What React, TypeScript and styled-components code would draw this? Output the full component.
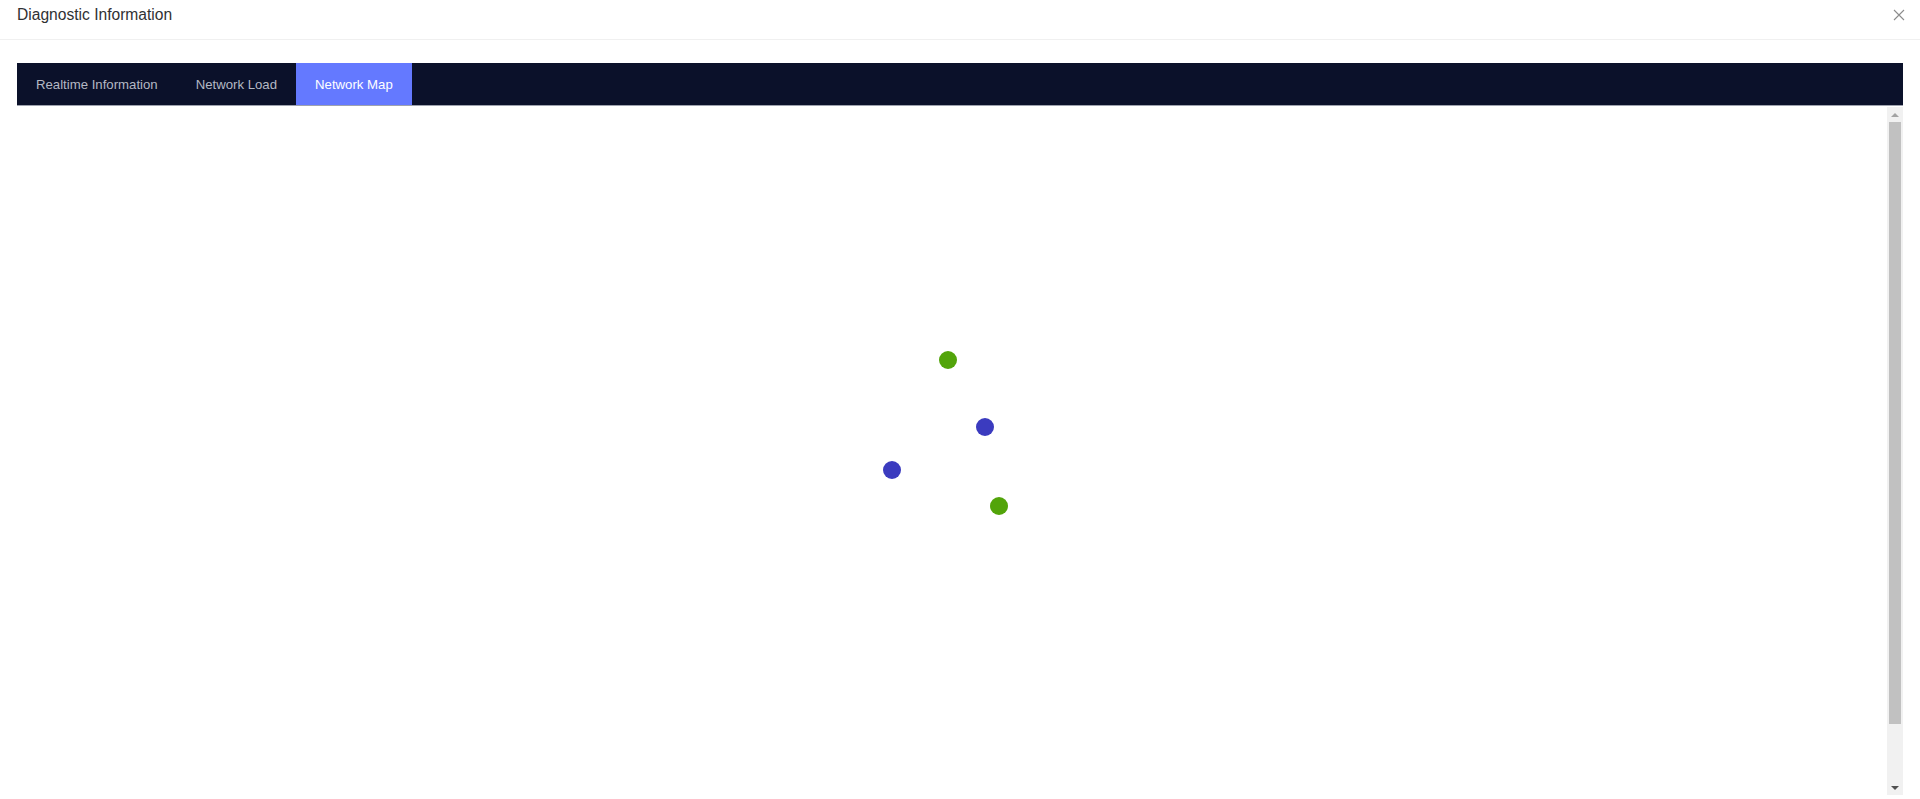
import styled, { createGlobalStyle } from 'styled-components';

const Global = createGlobalStyle`
  html, body {
    margin: 0;
    padding: 0;
    background: #ffffff;
    font-family: "Segoe UI", "Liberation Sans", "Noto Sans", Arial, sans-serif;
  }
`

const Janela = styled.div`
  width: 1920px;
  height: 799px;
  display: flex;
  flex-direction: column;
  overflow: hidden;
`
const Cabecalho = styled.div`
  height: 39px;
  flex: 0 0 39px;
  display: flex;
  align-items: center;
  justify-content: space-between;
  padding: 0 14px 0 17px;
  border-bottom: 1px solid #f0f0f0;
  box-sizing: content-box;
`
const Titulo = styled.h1`
  margin: 0 0 10px 0;
  font-size: 15.6px;
  font-weight: 400;
  color: #303133;
`
const Fechar = styled.button`
  width: 14px;
  height: 14px;
  padding: 0;
  margin-bottom: 10px;
  border: none;
  background: transparent;
  display: flex;
  align-items: center;
  justify-content: center;
  cursor: pointer;
`
const Corpo = styled.div`
  flex: 1;
  display: flex;
  flex-direction: column;
  padding: 23px 17px 4px 17px;
  min-height: 0;
`
const Abas = styled.div`
  height: 42px;
  flex: 0 0 42px;
  display: flex;
  background: #0b112a;
  border-bottom: 1px solid #9ea2ae;
`
const Aba = styled.div<{ $ativa?: boolean }>`
  display: flex;
  align-items: center;
  padding: 0 19px;
  font-size: 13.2px;
  color: ${props => props.$ativa ? '#ffffff' : '#b4b8c4'};
  background: ${props => props.$ativa ? '#6479ff' : 'transparent'};
  cursor: pointer;
`
const Area = styled.div`
  flex: 1;
  display: flex;
  min-height: 0;
`
const Mapa = styled.svg`
  flex: 1;
  height: 100%;
  display: block;
`
const Rolagem = styled.div`
  width: 16px;
  flex: 0 0 16px;
  margin-top: 1px;
  display: flex;
  flex-direction: column;
  align-items: center;
  background: #f1f1f1;
`
const Seta = styled.div<{ $baixo?: boolean; $cor: string }>`
  height: 15px;
  flex: 0 0 15px;
  width: 100%;
  display: flex;
  align-items: center;
  justify-content: center;
  &::after {
    content: '';
    border-left: 4px solid transparent;
    border-right: 4px solid transparent;
    ${props => props.$baixo
      ? `border-top: 4px solid ${props.$cor};`
      : `border-bottom: 4px solid ${props.$cor};`}
  }
`
const Polegar = styled.div`
  width: 12px;
  height: 602px;
  background: #c1c1c1;
`
const Trilho = styled.div`
  flex: 1;
  width: 100%;
  display: flex;
  justify-content: center;
`

// nós do mapa: posição na tela é o próprio conteúdo
const nos = [
  { x: 931, y: 254, cor: '#52a40a' },
  { x: 968, y: 321, cor: '#3b3bbf' },
  { x: 875, y: 364, cor: '#3b3bbf' },
  { x: 982, y: 400, cor: '#52a40a' },
]

const abas = ['Realtime Information', 'Network Load', 'Network Map']

function App() {
  const ativa = 2;

  return (
    <Janela>
      <Global />
      <Cabecalho>
        <Titulo>Diagnostic Information</Titulo>
        <Fechar aria-label="close">
          <svg width="12" height="12" viewBox="0 0 12 12">
            <path d="M1 1 L11 11 M11 1 L1 11" stroke="#8c8c8c" strokeWidth="1.1" fill="none" />
          </svg>
        </Fechar>
      </Cabecalho>
      <Corpo>
        <Abas>
          {abas.map((a, i) => (
            <Aba key={a} $ativa={i === ativa}>{a}</Aba>
          ))}
        </Abas>
        <Area>
          <Mapa>
            {nos.map((n, i) => (
              <circle key={i} cx={n.x} cy={n.y} r={9} fill={n.cor} />
            ))}
          </Mapa>
          <Rolagem>
            <Seta $cor="#a3a3a3" />
            <Trilho><Polegar /></Trilho>
            <Seta $baixo $cor="#505050" />
          </Rolagem>
        </Area>
      </Corpo>
    </Janela>
  )
}

export default App;
